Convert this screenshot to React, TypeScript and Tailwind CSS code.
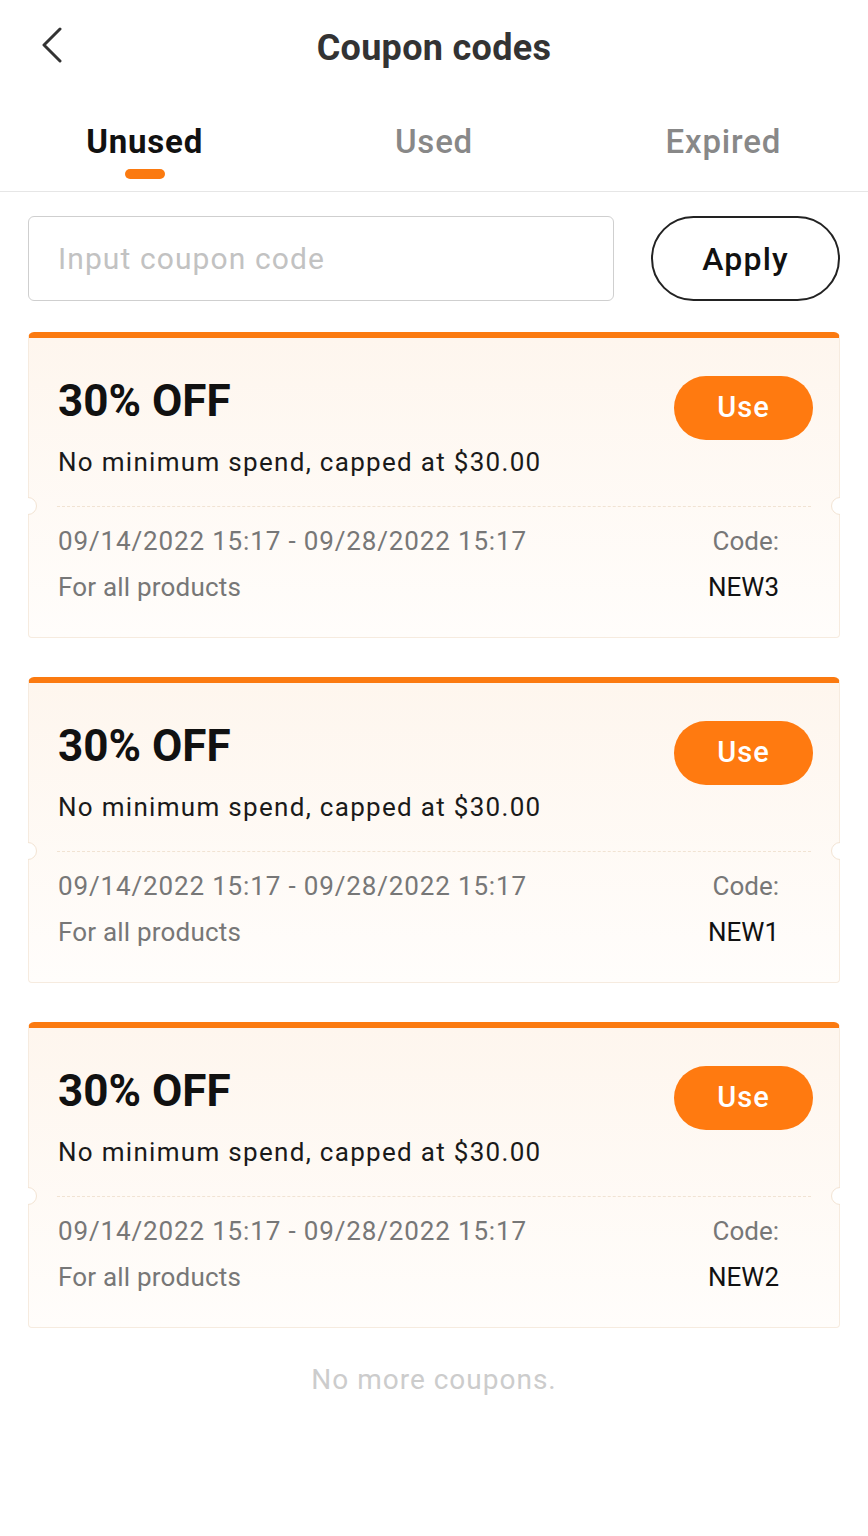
import React from "react";

const coupons = [{ code: "NEW3" }, { code: "NEW1" }, { code: "NEW2" }];

function CouponCard({ code }: { code: string }) {
  return (
    <div className="relative overflow-hidden">
      <div className="rounded-t-[6px] rounded-b-[4px] border-t-[6px] border-t-[#fb7a10] border-x border-b border-x-[#f6ebdf] border-b-[#f6ebdf] bg-gradient-to-b from-[#fef6ee] to-[#fffdfb]">
        <div className="flex justify-between pl-[29px] pr-[26px] pt-[37px] pb-[26px]">
          <div>
            <div className="text-[44px] leading-[52px] font-bold text-[#111]">30% OFF</div>
            <div className="mt-[17px] text-[26px] leading-[36px] tracking-[1.3px] text-[#1a1a1a]">No minimum spend, capped at $30.00</div>
          </div>
          <button className="mt-px h-[64px] w-[139px] rounded-full bg-[#ff7a10] text-[29px] font-medium tracking-[1px] text-white">Use</button>
        </div>
        <div className="mx-[28px] border-t border-dashed border-[#f1e3d3]" />
        <div className="flex justify-between pl-[29px] pr-[60px] pt-[16px] pb-[32px] text-[26px] leading-[36px]">
          <div className="flex flex-col gap-[10px] text-[#777]">
            <div className="tracking-[0.85px]">09/14/2022 15:17 - 09/28/2022 15:17</div>
            <div className="tracking-[0.2px]">For all products</div>
          </div>
          <div className="flex flex-col items-end gap-[10px]">
            <div className="text-[#777]">Code:</div>
            <div className="text-[#111]">{code}</div>
          </div>
        </div>
      </div>
      <div className="absolute left-[-9px] top-[165px] h-[18px] w-[18px] rounded-full border border-[#f3e4d4] bg-white" />
      <div className="absolute right-[-9px] top-[165px] h-[18px] w-[18px] rounded-full border border-[#f3e4d4] bg-white" />
    </div>
  );
}

export default function App() {
  return (
    <div className="min-h-[1536px] w-[868px] bg-white font-['Roboto',_sans-serif]">
      {/* Header */}
      <div className="relative flex h-[95px] items-center justify-center">
        <svg className="absolute left-[40px] top-[27px]" width="24" height="36" viewBox="0 0 24 36" fill="none">
          <polyline points="20,2 4,18 20,34" stroke="#333" strokeWidth="3" strokeLinecap="round" strokeLinejoin="round" />
        </svg>
        <h1 className="text-[36px] font-bold tracking-[0.3px] text-[#333]">Coupon codes</h1>
      </div>

      {/* Tabs */}
      <div className="grid h-[97px] grid-cols-3 border-b border-[#e6e6e6]">
        {["Unused", "Used", "Expired"].map((t, i) => (
          <div key={t} className="flex flex-col items-center pt-[24px]">
            <span className={`text-[33px] leading-[46px] tracking-[0.8px] ${i === 0 ? "font-bold text-[#111]" : "font-medium text-[#888]"}`}>{t}</span>
            {i === 0 && <span className="mt-[4px] h-[10px] w-[40px] rounded-full bg-[#fb7a10]" />}
          </div>
        ))}
      </div>

      {/* Input */}
      <div className="mt-[24px] flex gap-[37px] px-[28px]">
        <input
          placeholder="Input coupon code"
          className="h-[85px] w-[586px] rounded-[6px] border border-[#cfcfcf] px-[29px] text-[30px] tracking-[1.1px] outline-none placeholder:text-[#c2c2c2]"
        />
        <button className="h-[85px] flex-1 rounded-full border-2 border-[#222] text-[32px] font-medium tracking-[1.2px] text-[#111]">Apply</button>
      </div>

      {/* Coupons */}
      <div className="mt-[31px] flex flex-col gap-[39px] px-[28px]">
        {coupons.map((c) => (
          <CouponCard key={c.code} code={c.code} />
        ))}
      </div>

      <div className="mt-[32px] text-center text-[28px] leading-[40px] tracking-[1px] text-[#cccccc]">No more coupons.</div>
    </div>
  );
}
